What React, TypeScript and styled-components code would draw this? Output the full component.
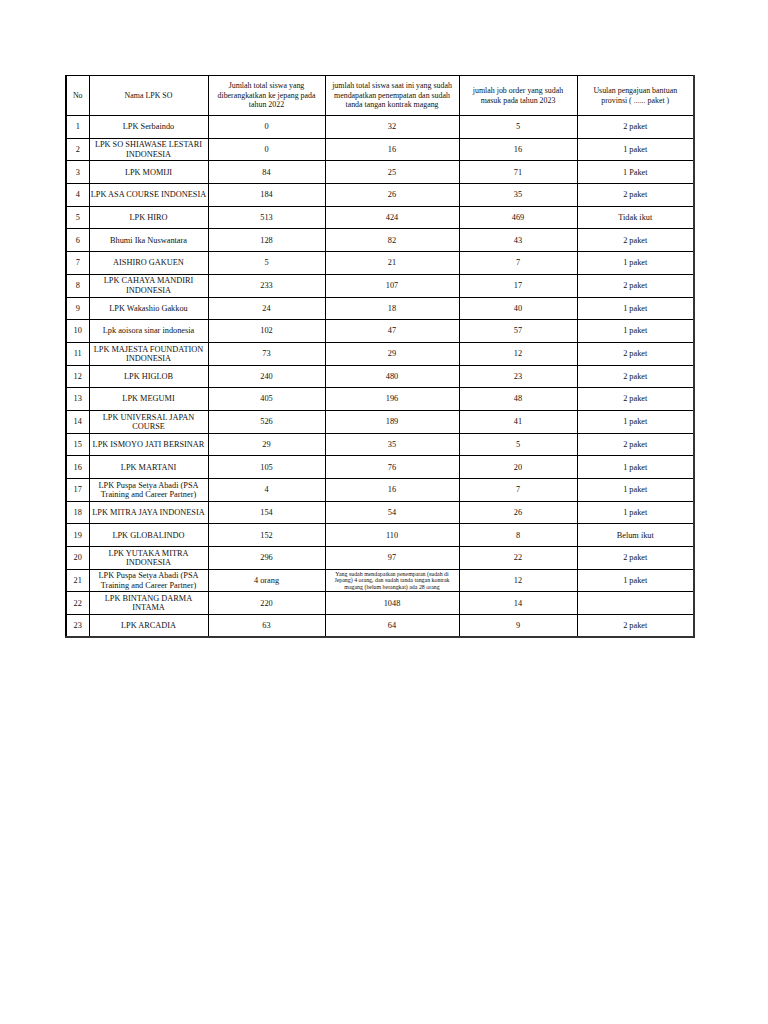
import styled, { createGlobalStyle } from 'styled-components';

interface Row {
  no: number;
  name: string;
  sent: string;
  placed: string;
  jobs: string;
  proposal: string;
  smallPlaced?: boolean;
}

const rows: Row[] = [
  { no: 1, name: 'LPK Serbaindo', sent: '0', placed: '32', jobs: '5', proposal: '2 paket' },
  { no: 2, name: 'LPK SO SHIAWASE LESTARI INDONESIA', sent: '0', placed: '16', jobs: '16', proposal: '1 paket' },
  { no: 3, name: 'LPK MOMIJI', sent: '84', placed: '25', jobs: '71', proposal: '1 Paket' },
  { no: 4, name: 'LPK ASA COURSE INDONESIA', sent: '184', placed: '26', jobs: '35', proposal: '2 paket' },
  { no: 5, name: 'LPK HIRO', sent: '513', placed: '424', jobs: '469', proposal: 'Tidak ikut' },
  { no: 6, name: 'Bhumi Ika Nuswantara', sent: '128', placed: '82', jobs: '43', proposal: '2 paket' },
  { no: 7, name: 'AISHIRO GAKUEN', sent: '5', placed: '21', jobs: '7', proposal: '1 paket' },
  { no: 8, name: 'LPK CAHAYA MANDIRI INDONESIA', sent: '233', placed: '107', jobs: '17', proposal: '2 paket' },
  { no: 9, name: 'LPK Wakashio Gakkou', sent: '24', placed: '18', jobs: '40', proposal: '1 paket' },
  { no: 10, name: 'Lpk aoisora sinar indonesia', sent: '102', placed: '47', jobs: '57', proposal: '1 paket' },
  { no: 11, name: 'LPK MAJESTA FOUNDATION INDONESIA', sent: '73', placed: '29', jobs: '12', proposal: '2 paket' },
  { no: 12, name: 'LPK HIGLOB', sent: '240', placed: '480', jobs: '23', proposal: '2 paket' },
  { no: 13, name: 'LPK MEGUMI', sent: '405', placed: '196', jobs: '48', proposal: '2 paket' },
  { no: 14, name: 'LPK UNIVERSAL JAPAN COURSE', sent: '526', placed: '189', jobs: '41', proposal: '1 paket' },
  { no: 15, name: 'LPK ISMOYO JATI BERSINAR', sent: '29', placed: '35', jobs: '5', proposal: '2 paket' },
  { no: 16, name: 'LPK MARTANI', sent: '105', placed: '76', jobs: '20', proposal: '1 paket' },
  { no: 17, name: 'LPK Puspa Setya Abadi (PSA Training and Career Partner)', sent: '4', placed: '16', jobs: '7', proposal: '1 paket' },
  { no: 18, name: 'LPK MITRA JAYA INDONESIA', sent: '154', placed: '54', jobs: '26', proposal: '1 paket' },
  { no: 19, name: 'LPK GLOBALINDO', sent: '152', placed: '110', jobs: '8', proposal: 'Belum ikut' },
  { no: 20, name: 'LPK YUTAKA MITRA INDONESIA', sent: '296', placed: '97', jobs: '22', proposal: '2 paket' },
  {
    no: 21,
    name: 'LPK Puspa Setya Abadi (PSA Training and Career Partner)',
    sent: '4 orang',
    placed:
      'Yang sudah mendapatkan penempatan (sudah di Jepang) 4 orang, dan sudah tanda tangan kontrak magang (belum berangkat) ada 28 orang',
    jobs: '12',
    proposal: '1 paket',
    smallPlaced: true,
  },
  { no: 22, name: 'LPK BINTANG DARMA INTAMA', sent: '220', placed: '1048', jobs: '14', proposal: '' },
  { no: 23, name: 'LPK ARCADIA', sent: '63', placed: '64', jobs: '9', proposal: '2 paket' },
];

const GlobalStyle = createGlobalStyle`
  html, body {
    margin: 0;
    padding: 0;
    background: #ffffff;
  }
  body {
    font-family: "Liberation Serif", "Times New Roman", serif;
    color: #111111;
  }
`;

const Page = styled.div`
  width: 768px;
  height: 1024px;
  padding: 75px 0 0 65px;
  box-sizing: border-box;
`;

const Sheet = styled.table`
  width: 628px;
  border-collapse: collapse;
  table-layout: fixed;
  border-top: 1px solid #000;
  border-left: 2px solid #000;
  border-right: 2px solid #333;
  border-bottom: 2px solid #333;
`;

const Col = styled.col<{ $w: number }>`
  width: ${({ $w }) => $w}px;
`;

const HeadCell = styled.th<{ $pad?: number }>`
  height: 39px;
  padding: 0 ${({ $pad }) => $pad ?? 9}px;
  border: 1px solid #000;
  font-size: 7.9px;
  line-height: 9.6px;
  font-weight: normal;
  text-align: center;
  vertical-align: middle;
`;

const Cell = styled.td<{ $small?: boolean }>`
  height: 22.7px;
  padding: ${({ $small }) => ($small ? '0 4px' : '0 1px')};
  border: 1px solid #000;
  font-size: ${({ $small }) => ($small ? '5.9px' : '8.3px')};
  line-height: ${({ $small }) => ($small ? '6.4px' : '9.2px')};
  text-align: center;
  vertical-align: middle;
  box-sizing: border-box;
  overflow: hidden;
`;

function App() {
  return (
    <>
      <GlobalStyle />
      <Page>
        <Sheet>
          <colgroup>
            <Col $w={23} />
            <Col $w={119} />
            <Col $w={117} />
            <Col $w={134} />
            <Col $w={118} />
            <Col $w={117} />
          </colgroup>
          <thead>
            <tr>
              <HeadCell $pad={1}>No</HeadCell>
              <HeadCell>Nama LPK SO</HeadCell>
              <HeadCell $pad={6}>Jumlah total siswa yang diberangkatkan ke jepang pada tahun 2022</HeadCell>
              <HeadCell $pad={2}>
                jumlah total siswa saat ini yang sudah mendapatkan penempatan dan sudah tanda tangan kontrak
                magang
              </HeadCell>
              <HeadCell>jumlah job order yang sudah masuk pada tahun 2023</HeadCell>
              <HeadCell>Usulan pengajuan bantuan provinsi ( ...... paket )</HeadCell>
            </tr>
          </thead>
          <tbody>
            {rows.map((row) => (
              <tr key={row.no}>
                <Cell>{row.no}</Cell>
                <Cell>{row.name}</Cell>
                <Cell>{row.sent}</Cell>
                <Cell $small={row.smallPlaced}>{row.placed}</Cell>
                <Cell>{row.jobs}</Cell>
                <Cell>{row.proposal}</Cell>
              </tr>
            ))}
          </tbody>
        </Sheet>
      </Page>
    </>
  );
}

export default App;
